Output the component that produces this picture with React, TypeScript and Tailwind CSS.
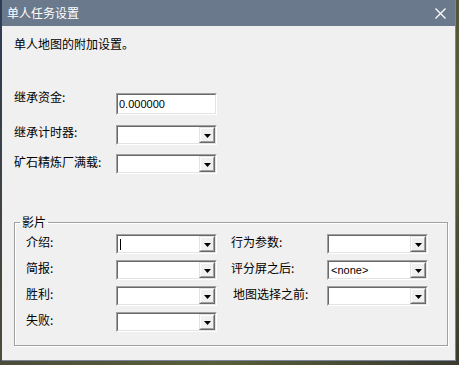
import React from "react";

const cjk = { fontFamily: '"Noto Sans CJK SC", "Noto Sans", sans-serif' };
const latin = { fontFamily: '"Liberation Sans", Arial, sans-serif' };

function Sunken({ children, className = "" }: { children?: React.ReactNode; className?: string }) {
  return (
    <div className={"w-[101px] h-[20px] border border-t-[#a0a0a0] border-l-[#a0a0a0] border-b-white border-r-white " + className}>
      <div className="w-full h-full border border-t-[#696969] border-l-[#696969] border-b-[#e3e3e3] border-r-[#e3e3e3] bg-white flex items-stretch">
        {children}
      </div>
    </div>
  );
}

function Combo({ value, cursor }: { value?: string; cursor?: boolean }) {
  return (
    <Sunken>
      <div className="flex-1 flex items-center min-w-0">
        {cursor && <div className="ml-[2px] w-px h-[11px] bg-black" />}
        {value && (
          <span className="pl-[2px] text-[11px] leading-[14px] text-black" style={latin}>
            {value}
          </span>
        )}
      </div>
      <div className="w-[16px] h-[16px] border border-t-[#e3e3e3] border-l-[#e3e3e3] border-b-[#696969] border-r-[#696969]">
        <div className="w-full h-full bg-[#f0f0f0] border border-t-white border-l-white border-b-[#a0a0a0] border-r-[#a0a0a0] flex items-center justify-center">
          <svg width="7" height="4" viewBox="0 0 7 4" className="mt-[2px]">
            <polygon points="0,0 7,0 3.5,4" fill="#000" />
          </svg>
        </div>
      </div>
    </Sunken>
  );
}

function Label({ children, className = "" }: { children: React.ReactNode; className?: string }) {
  return (
    <div className={"text-[12px] leading-[14px] text-black whitespace-nowrap " + className} style={cjk}>
      {children}
    </div>
  );
}

export default function App() {
  return (
    <div className="w-[459px] h-[365px] overflow-hidden bg-[linear-gradient(135deg,#2d3b55_0%,#4a4a3a_40%,#5a5f3a_70%,#3a3a30_100%)]">
      <div className="ml-[2px] w-[454px] h-[361px] flex flex-col bg-[#f0f0f0] border-r border-b border-[#7a8698]">
        {/* Title bar */}
        <div className="h-[26px] bg-[#6a798b] flex items-center justify-between pl-[5px] pr-[9px] shrink-0">
          <span className="text-white text-[12px] leading-[14px]" style={cjk}>单人任务设置</span>
          <svg width="11" height="11" viewBox="0 0 11 11">
            <path d="M0.5 0.5 L10.5 10.5 M10.5 0.5 L0.5 10.5" stroke="#fff" strokeWidth="1.3" />
          </svg>
        </div>

        {/* Body */}
        <div className="flex flex-col pl-[12px]">
          <Label className="mt-[11px]">单人地图的附加设置。</Label>

          <div className="flex items-start mt-[39px]">
            <Label className="w-[102px]">继承资金:</Label>
            <div className="mt-[3px]">
              <Sunken className="h-[22px]">
                <span className="pl-[1px] self-center text-[11px] leading-[14px] text-black" style={latin}>0.000000</span>
              </Sunken>
            </div>
          </div>

          <div className="flex items-start mt-[10px]">
            <Label className="w-[102px]">继承计时器:</Label>
            <Combo />
          </div>

          <div className="flex items-start mt-[9px]">
            <Label className="w-[102px] mt-[1px]">矿石精炼厂满载:</Label>
            <Combo />
          </div>

          <fieldset className="mt-[41px] w-[434px] border border-[#a0a0a0] shadow-[inset_1px_1px_0_#fff,1px_1px_0_#fff] px-0 pb-[13px]">
            <legend className="ml-[5px] px-[2px] text-[12px] leading-[14px] text-black" style={cjk}>影片</legend>
            <div className="pl-[11px] pt-[5px] grid grid-cols-[90px_101px_14px_96px_101px] gap-y-[6px]">
              <Label className="mt-[1px]">介绍:</Label>
              <Combo cursor />
              <div />
              <Label className="mt-[1px]">行为参数:</Label>
              <Combo />

              <Label className="mt-[1px]">简报:</Label>
              <Combo />
              <div />
              <Label className="mt-[1px]">评分屏之后:</Label>
              <Combo value="<none>" />

              <Label className="mt-[1px]">胜利:</Label>
              <Combo />
              <div />
              <Label className="mt-[1px] pl-[2px]">地图选择之前:</Label>
              <Combo />

              <Label className="mt-[1px]">失败:</Label>
              <Combo />
              <div />
              <div />
              <div />
            </div>
          </fieldset>
        </div>
      </div>
    </div>
  );
}
